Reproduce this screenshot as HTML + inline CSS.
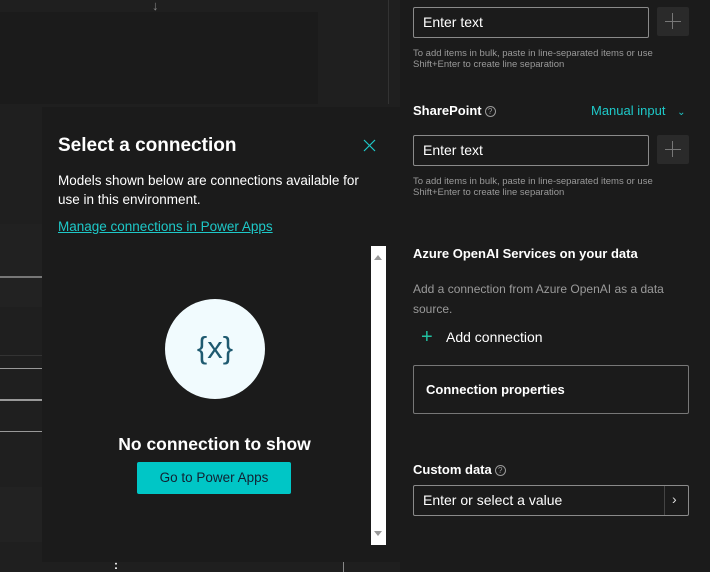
<!DOCTYPE html>
<html><head><style>
*{box-sizing:border-box;margin:0;padding:0}
body{width:710px;height:572px;overflow:hidden;background:#1f1f1f;font-family:"Liberation Sans",sans-serif;color:#fff;position:relative}
.a{position:absolute}
.inp{position:absolute;border:1px solid #8a8a8a;border-radius:2px;background:#1b1b1b;color:#fff;font-size:14px;padding-left:9px;line-height:29px}
.plus{position:absolute;width:32px;height:29px;background:#2a2a2a;border-radius:2px}
.plus:before{content:"";position:absolute;left:8px;top:14px;width:16px;height:1px;background:#777}
.plus:after{content:"";position:absolute;left:15px;top:6px;width:1px;height:16px;background:#777}
.hint{position:absolute;font-size:9.5px;color:#9a9a9a;line-height:11px}
.q{display:inline-block;width:11px;height:11px;border:1px solid #999;border-radius:50%;font-size:8px;line-height:9px;text-align:center;color:#999;vertical-align:middle;margin-left:3px;font-weight:normal}
</style></head><body>
<div class="a" style="left:0;top:12px;width:318px;height:92px;background:#1b1b1b"></div>
<div class="a" style="left:388px;top:0;width:1px;height:104px;background:#333"></div>
<div class="a" style="left:152px;top:-2px;color:#888;font-size:13px">↓</div>
<div class="a" style="left:0;top:224px;width:42px;height:53px;background:#212121"></div>
<div class="a" style="left:0;top:276px;width:42px;height:2px;background:#777"></div>
<div class="a" style="left:0;top:278px;width:42px;height:29px;background:#222"></div>
<div class="a" style="left:0;top:355px;width:42px;height:1px;background:#333"></div>
<div class="a" style="left:0;top:368px;width:42px;height:1px;background:#999"></div>
<div class="a" style="left:0;top:399px;width:42px;height:2px;background:#999"></div>
<div class="a" style="left:0;top:431px;width:42px;height:1px;background:#999"></div>
<div class="a" style="left:0;top:487px;width:42px;height:55px;background:#222"></div>

<!-- right panel -->
<div class="a" style="left:400px;top:0;width:310px;height:572px;background:#1b1b1b"></div>
<div class="inp" style="left:413px;top:7px;width:236px;height:31px">Enter text</div>
<div class="plus" style="left:657px;top:7px"></div>
<div class="hint" style="left:413px;top:48px">To add items in bulk, paste in line-separated items or use<br>Shift+Enter to create line separation</div>
<div class="a" style="left:413px;top:103px;font-size:13px;font-weight:bold">SharePoint<span class="q">?</span></div>
<div class="a" style="left:591px;top:103px;font-size:13px;color:#1ec8c8">Manual input <span style="margin-left:8px;font-size:10px">&#8964;</span></div>
<div class="inp" style="left:413px;top:135px;width:236px;height:31px">Enter text</div>
<div class="plus" style="left:657px;top:135px"></div>
<div class="hint" style="left:413px;top:176px">To add items in bulk, paste in line-separated items or use<br>Shift+Enter to create line separation</div>
<div class="a" style="left:413px;top:246px;font-size:13px;font-weight:bold">Azure OpenAI Services on your data</div>
<div class="a" style="left:413px;top:279px;font-size:12px;color:#9a9a9a;line-height:20px">Add a connection from Azure OpenAI as a data<br>source.</div>
<div class="a" style="left:421px;top:328px;font-size:20px;color:#22c0a0;line-height:18px">+</div>
<div class="a" style="left:446px;top:329px;font-size:14px">Add connection</div>
<div class="a" style="left:413px;top:365px;width:276px;height:49px;border:1px solid #777;border-radius:2px"></div>
<div class="a" style="left:426px;top:382px;font-size:13px;font-weight:bold">Connection properties</div>
<div class="a" style="left:413px;top:462px;font-size:13px;font-weight:bold">Custom data<span class="q">?</span></div>
<div class="inp" style="left:413px;top:485px;width:276px;height:31px">Enter or select a value</div>
<div class="a" style="left:664px;top:486px;width:1px;height:29px;background:#444"></div>
<div class="a" style="left:672px;top:491px;font-size:14px;color:#ddd">&#8250;</div>
<div class="a" style="left:343px;top:560px;width:1px;height:12px;background:#888"></div>

<!-- dialog -->
<div class="a" style="left:42px;top:107px;width:358px;height:455px;background:#1b1b1b"></div>
<div class="a" style="left:58px;top:135px;font-size:19px;font-weight:bold">Select a connection</div>
<svg class="a" style="left:363px;top:139px" width="13" height="13"><path d="M1 1L12 12M12 1L1 12" stroke="#1ec8c8" stroke-width="1.2"/></svg>
<div class="a" style="left:58px;top:171px;font-size:13.5px;line-height:19px">Models shown below are connections available for<br>use in this environment.</div>
<div class="a" style="left:58px;top:219px;font-size:13.5px;color:#1ec8c8;text-decoration:underline">Manage connections in Power Apps</div>
<div class="a" style="left:371px;top:246px;width:15px;height:299px;background:#fff"></div>
<div class="a" style="left:374px;top:255px;width:0;height:0;border-left:4px solid transparent;border-right:4px solid transparent;border-bottom:5px solid #999"></div>
<div class="a" style="left:374px;top:531px;width:0;height:0;border-left:4px solid transparent;border-right:4px solid transparent;border-top:5px solid #999"></div>
<div class="a" style="left:165px;top:299px;width:100px;height:100px;border-radius:50%;background:#f1fbfe;color:#1f5a70;font-size:31px;text-align:center;line-height:98px">{x}</div>
<div class="a" style="left:58px;top:434px;width:313px;text-align:center;font-size:17.5px;font-weight:bold">No connection to show</div>
<div class="a" style="left:137px;top:462px;width:154px;height:32px;background:#00c6c6;border-radius:2px;color:#123;font-size:13.5px;text-align:center;line-height:32px">Go to Power Apps</div>
<div class="a" style="left:114px;top:558px;font-size:12px;font-weight:bold">:</div>
</body></html>
